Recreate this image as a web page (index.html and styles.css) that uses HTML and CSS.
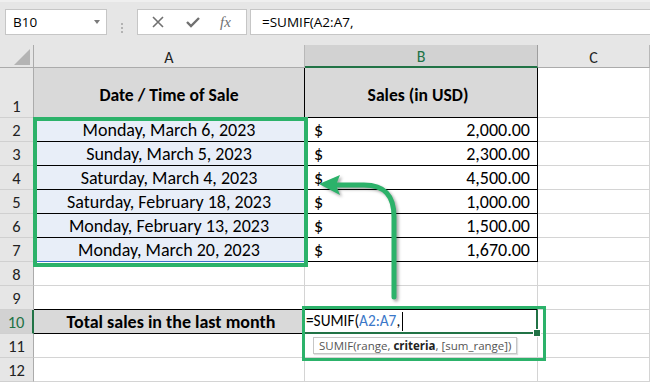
FILE: index.html
```html
<!DOCTYPE html>
<html lang="en">
<head>
  <meta charset="utf-8">
  <title>SUMIF last month</title>
  <link rel="stylesheet" href="styles.css">
</head>
<body>
  <div class="toolbar">
    <div class="namebox"><span>B10</span><span class="caret"></span></div>
    <div class="grip"><i></i><i></i><i></i></div>
    <div class="fbtns">
      <svg width="12" height="12" viewBox="0 0 12 12"><path d="M1 1 L11 11 M11 1 L1 11" stroke="#707070" stroke-width="1.6" fill="none"/></svg>
      <svg width="14" height="12" viewBox="0 0 14 12"><path d="M1 6 L5 10 L13 2" stroke="#707070" stroke-width="2.4" fill="none"/></svg>
      <span class="fx">fx</span>
    </div>
    <div class="finput">=SUMIF(A2:A7,</div>
  </div>

  <div class="sheet">
    <div class="corner"><svg width="34" height="22" viewBox="0 0 34 22"><polygon points="14,20 30,4 30,20" fill="#b4b4b4"/></svg></div>
    <div class="hd">A</div>
    <div class="hd hd-sel">B</div>
    <div class="hd">C</div>

    <div class="rh">1</div>
    <div class="c th">Date / Time of Sale</div>
    <div class="c th th-b">Sales (in USD)</div>
    <div class="c"></div>

    <div class="rh">2</div>
    <div class="c date">Monday, March 6, 2023</div>
    <div class="c money"><span>$</span><span>2,000.00</span></div>
    <div class="c"></div>

    <div class="rh">3</div>
    <div class="c date">Sunday, March 5, 2023</div>
    <div class="c money"><span>$</span><span>2,300.00</span></div>
    <div class="c"></div>

    <div class="rh">4</div>
    <div class="c date">Saturday, March 4, 2023</div>
    <div class="c money"><span>$</span><span>4,500.00</span></div>
    <div class="c"></div>

    <div class="rh">5</div>
    <div class="c date">Saturday, February 18, 2023</div>
    <div class="c money"><span>$</span><span>1,000.00</span></div>
    <div class="c"></div>

    <div class="rh">6</div>
    <div class="c date">Monday, February 13, 2023</div>
    <div class="c money"><span>$</span><span>1,500.00</span></div>
    <div class="c"></div>

    <div class="rh">7</div>
    <div class="c date">Monday, March 20, 2023</div>
    <div class="c money"><span>$</span><span>1,670.00</span></div>
    <div class="c"></div>

    <div class="rh">8</div>
    <div class="c"></div>
    <div class="c"></div>
    <div class="c"></div>

    <div class="rh">9</div>
    <div class="c dark-bottom"></div>
    <div class="c dark-bottom"></div>
    <div class="c"></div>

    <div class="rh rh-sel">10</div>
    <div class="c total">Total sales in the last month</div>
    <div class="c active">=SUMIF(<span class="ref">A2:A7</span>,<span class="cursor"></span><span class="handle"></span></div>
    <div class="c"></div>

    <div class="rh">11</div>
    <div class="c"></div>
    <div class="c"></div>
    <div class="c"></div>

    <div class="rh">12</div>
    <div class="c"></div>
    <div class="c"></div>
    <div class="c"></div>

    <div class="refbox"></div>
    <div class="callout callout-a"></div>
    <div class="tip">SUMIF(range, <b>criteria</b>, [sum_range])</div>
    <div class="callout callout-b"></div>
    <svg class="arrow" width="650" height="337" viewBox="0 0 650 337">
      <path d="M394 252 L394 172 C394 151 385 140 364 140 L336 140" stroke="#2cb26a" stroke-width="5" stroke-linecap="round" fill="none"/>
      <polygon points="319,139 340,130 336,140 340,150" fill="#2cb26a"/>
    </svg>
  </div>
</body>
</html>
```

FILE: styles.css
```css
html, body {
	margin: 0;
	padding: 0;
}
body {
	width: 650px;
	height: 382px;
	overflow: hidden;
	background: #fff;
	font-family: Calibri, Carlito, 'Lato', sans-serif;
	color: #000;
}

/* formula bar */
.toolbar {
	height: 45px;
	box-sizing: border-box;
	background: #e6e6e6;
	border-top: 2px solid #efefef;
	padding: 7px 0 0 5px;
	display: flex;
	font-family: 'Open Sans', 'Noto Sans', sans-serif;
	font-size: 13.5px;
}
.namebox, .fbtns, .finput {
	height: 26px;
	box-sizing: border-box;
	background: #fff;
	border: 1px solid #c6c6c6;
	display: flex;
	align-items: center;
}
.namebox {
	width: 102px;
	padding: 0 6px 0 7px;
	justify-content: space-between;
}
.caret {
	width: 0;
	height: 0;
	border-left: 3.5px solid transparent;
	border-right: 3.5px solid transparent;
	border-top: 4px solid #7a7a7a;
}
.grip {
	width: 30px;
	display: flex;
	flex-direction: column;
	align-items: center;
	justify-content: center;
	gap: 2px;
	margin-top: 1px;
}
.grip i {
	width: 2px;
	height: 2px;
	background: #b3b3b3;
}
.fbtns {
	width: 110px;
	padding-left: 14px;
	gap: 22px;
}
.fx {
	font-family: 'Liberation Serif', serif;
	font-style: italic;
	font-size: 15px;
	color: #707070;
	margin-left: -2px;
}
.finput {
	flex: 1;
	margin-left: 3px;
	border-right: 0;
	padding-left: 11px;
}

/* grid */
.sheet {
	position: relative;
	display: grid;
	grid-template-columns: 34px 271px 233px 112px;
	grid-template-rows: 23px 50px repeat(11, 24px);
	font-size: 18px;
}
.sheet > div {
	box-sizing: border-box;
}
.corner, .hd, .rh {
	background: #e6e6e6;
	color: #222;
}
.corner {
	border-right: 1px solid #ababab;
	border-bottom: 1px solid #ababab;
}
.corner svg {
	display: block;
}
.hd {
	border-right: 1px solid #b8b8b8;
	border-bottom: 1px solid #ababab;
	display: flex;
	align-items: center;
	justify-content: center;
	font-size: 16px;
	padding-top: 2px;
}
.hd-sel {
	background: #d2d2d2;
	color: #217346;
	border-bottom: 2px solid #217346;
	border-right-color: #9e9e9e;
}
.rh {
	border-right: 1px solid #ababab;
	border-bottom: 1px solid #d0d0d0;
	display: flex;
	align-items: flex-end;
	justify-content: center;
	font-size: 16.5px;
	line-height: 20px;
	padding-bottom: 1px;
}
.rh-sel {
	background: #d2d2d2;
	color: #217346;
	border-right: 2px solid #217346;
}
.c {
	border-right: 1px solid #d4d4d4;
	border-bottom: 1px solid #d4d4d4;
	display: flex;
	align-items: flex-end;
	line-height: 22px;
	padding-bottom: 0;
	white-space: nowrap;
}
.th {
	background: #d9d9d9;
	font-weight: bold;
	font-size: 17.6px;
	justify-content: center;
	align-items: center;
	border-right-color: #000;
	border-bottom-color: #000;
	padding: 4px 0 0;
}
.th-b {
	padding-right: 6px;
}
.date {
	background: #e8eef8;
	justify-content: center;
	border-right-color: #000;
	border-bottom-color: #000;
}
.money {
	justify-content: space-between;
	padding: 0 7px 0 9px;
	border-right-color: #000;
	border-bottom-color: #000;
}
.dark-bottom {
	border-bottom-color: #000;
}
.total {
	background: #d9d9d9;
	font-weight: bold;
	justify-content: center;
	border-right-color: #000;
	border-bottom-color: #000;
	padding-left: 4px;
}
.active {
	position: relative;
	font-size: 15.3px;
	border-right: 2px solid #217346;
	border-bottom: 2px solid #217346;
	padding-left: 1px;
	padding-bottom: 0;
}
.ref {
	color: #3a77c8;
}
.cursor {
	display: inline-block;
	width: 1px;
	height: 19px;
	background: #000;
	margin-left: 2px;
	margin-bottom: 1px;
}
.handle {
	position: absolute;
	right: -5px;
	bottom: -5px;
	width: 6px;
	height: 6px;
	background: #217346;
	border: 1px solid #fff;
}

/* overlays */
.refbox {
	position: absolute;
	left: 34px;
	top: 73px;
	width: 271px;
	height: 144px;
	border: 1px solid #3f6fd0;
}
.callout {
	position: absolute;
	border: 3px solid #2cb26a;
	box-sizing: border-box;
}
.callout-a {
	left: 33px;
	top: 72px;
	width: 275px;
	height: 150px;
	border-width: 4px;
}
.callout-b {
	left: 302px;
	top: 261px;
	width: 244px;
	height: 55px;
}
.tip {
	position: absolute;
	left: 313px;
	top: 292px;
	height: 17px;
	box-sizing: border-box;
	padding: 0 5px;
	background: #fff;
	border: 1px solid #c6c6c6;
	box-shadow: 1px 1px 1px rgba(0, 0, 0, 0.12);
	font-family: 'Open Sans', 'Noto Sans', sans-serif;
	font-size: 11.5px;
	line-height: 15px;
	color: #555;
	white-space: nowrap;
}
.tip b {
	color: #222;
}
.arrow {
	position: absolute;
	left: 0;
	top: 0;
	filter: drop-shadow(2px 2px 1.5px rgba(0, 0, 0, 0.35));
}
```
